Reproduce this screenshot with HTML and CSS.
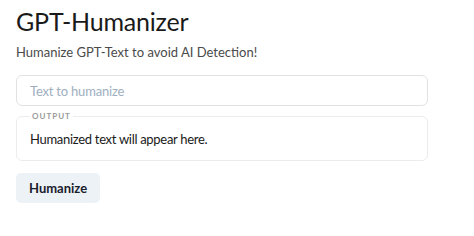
FILE: index.html
```html
<!DOCTYPE html>
<html>
<head>
    <title>GPT-Humanizer</title>
    <link rel="stylesheet" href="styles.css">
</head>
<body>
<div class="app">
    <h1>GPT-Humanizer</h1>
    <p class="subtitle">Humanize GPT-Text to avoid AI Detection!</p>
    <input type="text" class="text-input" placeholder="Text to humanize">
    <fieldset class="output">
        <legend>Output</legend>
        <p>Humanized text will appear here.</p>
    </fieldset>
    <button type="button" class="humanize-btn">Humanize</button>
</div>
</body>
</html>
```

FILE: styles.css
```css
body {
    margin: 0;
    font-family: Lato, sans-serif;
    background-color: #fff;
    color: #1a202c;
}
.app {
    width: 412px;
    padding: 4px 16px;
}
h1 {
    margin: 0;
    font-size: 25px;
    font-weight: 400;
    line-height: 34px;
    letter-spacing: -0.2px;
    color: #1a1a1a;
}
.subtitle {
    margin: 5px 0 14px;
    font-size: 13px;
    line-height: 18px;
    color: #4a4a4a;
}
.text-input {
    display: block;
    box-sizing: border-box;
    width: 100%;
    height: 31px;
    padding: 0 13px;
    border: 1px solid #e2e2e2;
    border-radius: 6px;
    font-family: inherit;
    font-size: 13px;
    letter-spacing: -0.2px;
    outline: none;
}
.text-input::placeholder {
    color: #a0aec0;
}
.output {
    margin: 5px 0 0;
    padding: 9px 13px 12px;
    border: 1px solid #ececec;
    border-radius: 6px;
}
.output legend {
    padding: 0 2px;
    margin-left: 0;
    font-size: 8px;
    font-weight: 700;
    letter-spacing: 1px;
    text-transform: uppercase;
    color: #9a9a9a;
}
.output p {
    margin: 0;
    font-size: 13px;
    line-height: 18px;
    letter-spacing: -0.3px;
    color: #1a1a1a;
}
.humanize-btn {
    margin-top: 12px;
    height: 30px;
    padding: 0 13px;
    border: none;
    border-radius: 5px;
    background-color: #edf2f7;
    font-family: inherit;
    font-size: 13px;
    font-weight: 700;
    color: #1a202c;
    cursor: pointer;
}
```
